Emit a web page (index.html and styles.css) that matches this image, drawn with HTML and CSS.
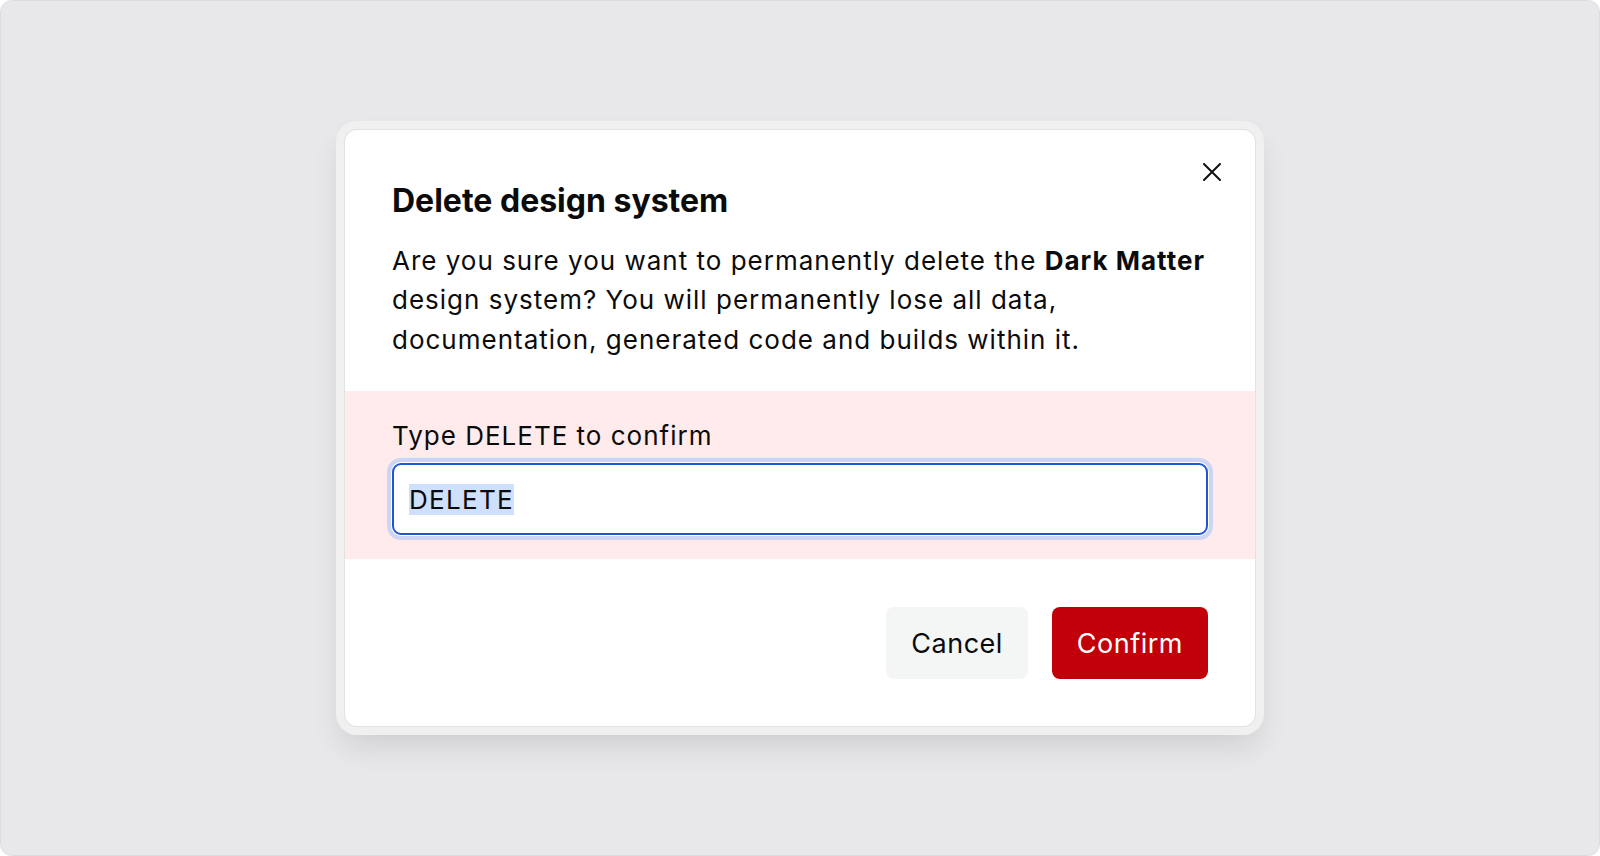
FILE: index.html
```html
<!DOCTYPE html>
<html lang="en">
<head>
  <meta charset="UTF-8">
  <meta name="viewport" content="width=device-width, initial-scale=1.0">
  <title>Delete design system</title>
  <link rel="stylesheet" href="styles.css">
</head>
<body>
  <div class="frame">
    <div class="modal" role="dialog" aria-labelledby="modalTitle">
      <button class="close-btn" aria-label="Close">
        <svg width="18" height="18" viewBox="0 0 18 18" fill="none">
          <path d="M1 1L17 17M17 1L1 17" stroke="#111" stroke-width="2" stroke-linecap="round"/>
        </svg>
      </button>

      <div class="modal-body">
        <h2 id="modalTitle" class="modal-title">Delete design system</h2>
        <p class="modal-text">Are you sure you want to permanently delete the <strong>Dark Matter</strong> design system? You will permanently lose all data, documentation, generated code and builds within it.</p>
      </div>

      <div class="confirm-zone">
        <label for="confirmInput" class="confirm-label">Type DELETE to confirm</label>
        <input id="confirmInput" class="confirm-input" type="text" value="DELETE" autofocus>
      </div>

      <div class="modal-footer">
        <button class="btn btn-cancel">Cancel</button>
        <button class="btn btn-confirm">Confirm</button>
      </div>
    </div>
  </div>

  <script>
    const confirmInput = document.getElementById("confirmInput");
    confirmInput.focus();
    confirmInput.select();
  </script>
</body>
</html>
```

FILE: styles.css
```css
* { box-sizing: border-box; }

body {
  margin: 0;
  background: #fff;
  font-family: Inter, "Noto Sans", Arial, sans-serif;
  color: #0b0b0c;
}

.frame {
  height: 856px;
  background: #e8e8ea;
  border: 1px solid #dcdde1;
  border-radius: 12px;
  display: flex;
  align-items: center;
  justify-content: center;
}

.modal {
  position: relative;
  width: 910px;
  background: #fff;
  border-radius: 12px;
  padding-top: 51px;
  box-shadow:
    0 0 0 1px #e2e2e5,
    0 0 0 9px #f0f0f1,
    0 16px 30px 4px rgba(0, 0, 0, 0.11);
}

.close-btn {
  position: absolute;
  top: 33px;
  right: 34px;
  width: 18px;
  height: 18px;
  padding: 0;
  border: none;
  background: none;
  cursor: pointer;
  display: flex;
}

.modal-body {
  padding: 0 36px 0 47px;
}

.modal-title {
  margin: 0;
  font-size: 32px;
  line-height: 40px;
  font-weight: 700;
}

.modal-text {
  margin: 20px 0 0;
  font-size: 26px;
  line-height: 39.5px;
  letter-spacing: 1px;
  font-weight: 400;
}

.modal-text strong {
  font-weight: 700;
  letter-spacing: 1px;
}

.confirm-zone {
  margin-top: 32px;
  background: #ffebeb;
  padding: 25px 47px 24px;
  display: flex;
  flex-direction: column;
  gap: 8px;
}

.confirm-label {
  font-size: 26px;
  line-height: 39px;
  letter-spacing: 1px;
}

.confirm-input {
  width: 100%;
  height: 72px;
  padding: 14px 15px;
  font-family: inherit;
  font-size: 26px;
  line-height: 40px;
  letter-spacing: 1.3px;
  color: #0b0b0c;
  background: #fff;
  border: 2px solid #1d55d4;
  border-radius: 9px;
  outline: none;
  box-shadow: 0 0 0 1px #fff, 0 0 0 5px #cdd5f3;
}

.confirm-input::selection {
  background: #cfe0fc;
  color: #0b0b0c;
}

.modal-footer {
  display: flex;
  justify-content: flex-end;
  gap: 24px;
  padding: 48px 47px 47px;
}

.btn {
  height: 72px;
  padding: 0 25px;
  border: none;
  border-radius: 8px;
  font-family: inherit;
  font-size: 27px;
  letter-spacing: 0.5px;
  cursor: pointer;
}

.btn-cancel {
  background: #f4f5f5;
  color: #0b0b0c;
}

.btn-confirm {
  background: #c1000a;
  color: #fff;
}
```
